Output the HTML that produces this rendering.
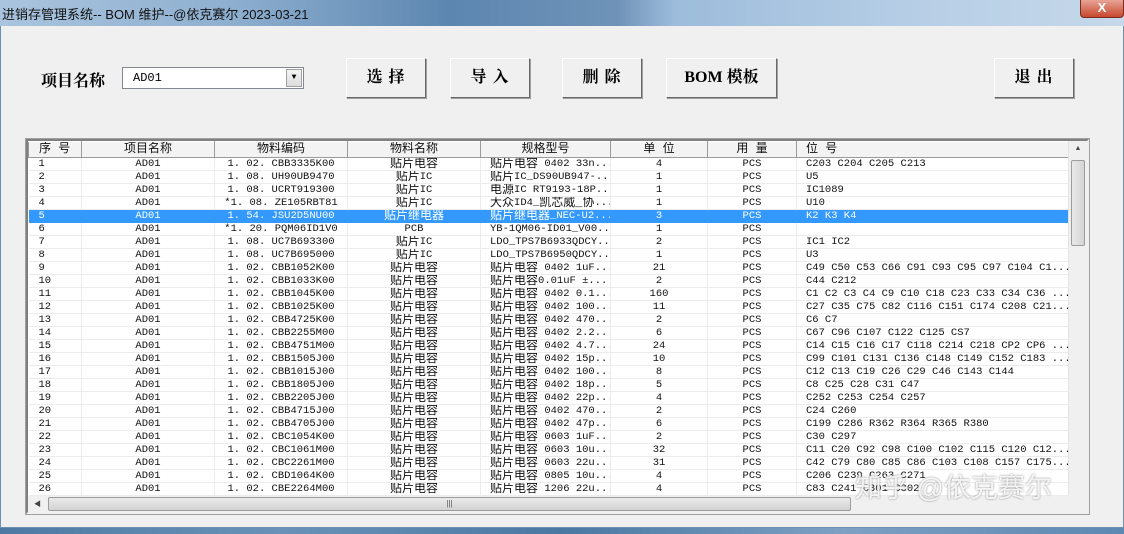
<!DOCTYPE html>
<html><head><meta charset="utf-8"><style>
*{margin:0;padding:0;box-sizing:border-box}
body{width:1124px;height:534px;overflow:hidden;background:#f0f0f0;position:relative;font-family:"Liberation Sans","Noto Sans CJK SC",sans-serif}
.title{position:absolute;left:0;top:0;width:1124px;height:26px;background:linear-gradient(90deg,#a9c4de 0%,#8fb0d0 20%,#5c86b0 40%,#6f93b8 55%,#9dbcdb 60%,#b5cde5 80%,#c6d8ea 100%);font-size:13px;color:#111;padding:4px 2px}
.close{position:absolute;right:0;top:0;width:44px;height:18px;background:linear-gradient(#e8a496,#c7472f);border:1px solid #7a2b22;border-top:none;border-radius:0 0 4px 4px;color:#fff;font-weight:bold;text-align:center;font-size:13px;line-height:16px}
.win{position:absolute;left:0;top:26px;width:1124px;height:502px;border:1px solid #6d8fb0;border-top:none;background:#f0f0f0}
.bot{position:absolute;left:0;top:528px;width:1124px;height:6px;background:linear-gradient(90deg,#4d7aa3,#6a92b8,#4a78a2,#7da0c3,#5d88b1)}
.lbl{position:absolute;left:41px;top:68px;font-size:16px;font-weight:bold;font-family:"Liberation Serif","Noto Serif CJK SC",serif}
.combo{position:absolute;left:122px;top:67px;width:182px;height:22px;background:#fff;border:1px solid #828790;font-family:"Liberation Mono","Noto Sans CJK SC",monospace;font-size:12px;padding:3px 0 0 10px}
.combo .ar{position:absolute;right:1px;top:1px;width:16px;height:18px;background:linear-gradient(#f4f4f4,#dcdcdc);border:1px solid #a0a0a0;font-size:8px;text-align:center;line-height:16px}
.btn{position:absolute;top:58px;height:40px;background:#f0f0f0;border:1px solid;border-color:#fff #6a6a6a #6a6a6a #fff;box-shadow:1px 1px 0 #a0a0a0;font-size:16px;font-weight:bold;text-align:center;line-height:38px;font-family:"Liberation Serif","Noto Serif CJK SC",serif;letter-spacing:1px}
.grid{position:absolute;left:26px;top:139px;width:1063px;height:375px;border:2px solid;border-color:#808080 #f0f0f0 #f0f0f0 #808080;outline:1px solid #a0a0a0;background:#fff}
table{position:absolute;left:28px;top:141px;width:1040px;border-collapse:collapse;table-layout:fixed;font-family:"Liberation Mono","Noto Sans CJK SC",monospace;font-size:10.5px}
td{height:13px;line-height:12px;padding:0;white-space:nowrap;overflow:hidden;border-right:1px solid #ececec;border-bottom:1px solid #ececec;text-align:center;color:#111;vertical-align:top}
td span{font-size:12px;line-height:12px;vertical-align:top}
.h td{font-size:12px}
td.l{text-align:left;padding-left:9px}
td:first-child{text-align:left;padding-left:10px}
tr.h td{height:16px;line-height:15px;background:#f3f3f3;border:1px solid #9a9a9a;border-top:1px solid #fff}
tr.s td{background:#3399ff;color:#fff;border-color:#3399ff}
.vs{position:absolute;left:1068px;top:141px;width:19px;height:355px;background:#f0f0f0;border-left:1px solid #e3e3e3}
.th{position:absolute;left:1071px;top:160px;width:14px;height:86px;background:linear-gradient(90deg,#e8e8e8,#d4d4d4);border:1px solid #9c9c9c;border-radius:2px}
.hs{position:absolute;left:28px;top:496px;width:1059px;height:16px;background:#f0f0f0}
.hth{position:absolute;left:48px;top:497px;width:803px;height:14px;background:linear-gradient(#eaeaea,#d2d2d2);border:1px solid #9c9c9c;border-radius:2px;font-size:8px;text-align:center;line-height:12px;color:#555}
.wm{position:absolute;left:855px;top:466px;font-size:27px;color:rgba(255,255,255,.85);text-shadow:0 0 2px #888;font-family:"Liberation Sans","Noto Sans CJK SC",sans-serif}
</style></head><body>
<div class="title">进销存管理系统-- BOM 维护--@依克赛尔 2023-03-21</div>
<div class="close">X</div>
<div class="win"></div>
<div class="bot"></div>
<div class="lbl">项目名称</div>
<div class="combo">AD01<div class="ar">▼</div></div>
<div class="btn" style="left:346px;width:80px">选 择</div>
<div class="btn" style="left:450px;width:80px">导 入</div>
<div class="btn" style="left:562px;width:80px">删 除</div>
<div class="btn" style="left:666px;width:111px;letter-spacing:0">BOM 模板</div>
<div class="btn" style="left:994px;width:80px">退 出</div>
<div class="grid"></div>
<table>
<colgroup><col style="width:53px"><col style="width:133px"><col style="width:133px"><col style="width:133px"><col style="width:130px"><col style="width:97px"><col style="width:89px"><col style="width:272px"></colgroup>
<tr class="h"><td>序 号</td><td>项目名称</td><td>物料编码</td><td>物料名称</td><td>规格型号</td><td>单 位</td><td>用 量</td><td class="l">位 号</td></tr>
<tr><td>1</td><td>AD01</td><td>1. 02. CBB3335K00</td><td><span>贴片电容</span></td><td class="l"><span>贴片电容</span> 0402 33n...</td><td>4</td><td>PCS</td><td class="l">C203 C204 C205 C213</td></tr>
<tr><td>2</td><td>AD01</td><td>1. 08. UH90UB9470</td><td><span>贴片</span>IC</td><td class="l"><span>贴片</span>IC_DS90UB947-...</td><td>1</td><td>PCS</td><td class="l">U5</td></tr>
<tr><td>3</td><td>AD01</td><td>1. 08. UCRT919300</td><td><span>贴片</span>IC</td><td class="l"><span>电源</span>IC RT9193-18P...</td><td>1</td><td>PCS</td><td class="l">IC1089</td></tr>
<tr><td>4</td><td>AD01</td><td>*1. 08. ZE105RBT81</td><td><span>贴片</span>IC</td><td class="l"><span>大众</span>ID4_<span>凯芯威_协</span>...</td><td>1</td><td>PCS</td><td class="l">U10</td></tr>
<tr class="s"><td>5</td><td>AD01</td><td>1. 54. JSU2D5NU00</td><td><span>贴片继电器</span></td><td class="l"><span>贴片继电器</span>_NEC-U2...</td><td>3</td><td>PCS</td><td class="l">K2 K3 K4</td></tr>
<tr><td>6</td><td>AD01</td><td>*1. 20. PQM06ID1V0</td><td>PCB</td><td class="l">YB-1QM06-ID01_V00...</td><td>1</td><td>PCS</td><td class="l"></td></tr>
<tr><td>7</td><td>AD01</td><td>1. 08. UC7B693300</td><td><span>贴片</span>IC</td><td class="l">LDO_TPS7B6933QDCY...</td><td>2</td><td>PCS</td><td class="l">IC1 IC2</td></tr>
<tr><td>8</td><td>AD01</td><td>1. 08. UC7B695000</td><td><span>贴片</span>IC</td><td class="l">LDO_TPS7B6950QDCY...</td><td>1</td><td>PCS</td><td class="l">U3</td></tr>
<tr><td>9</td><td>AD01</td><td>1. 02. CBB1052K00</td><td><span>贴片电容</span></td><td class="l"><span>贴片电容</span> 0402 1uF...</td><td>21</td><td>PCS</td><td class="l">C49 C50 C53 C66 C91 C93 C95 C97 C104 C1...</td></tr>
<tr><td>10</td><td>AD01</td><td>1. 02. CBB1033K00</td><td><span>贴片电容</span></td><td class="l"><span>贴片电容</span>0.01uF ±...</td><td>2</td><td>PCS</td><td class="l">C44 C212</td></tr>
<tr><td>11</td><td>AD01</td><td>1. 02. CBB1045K00</td><td><span>贴片电容</span></td><td class="l"><span>贴片电容</span> 0402 0.1...</td><td>160</td><td>PCS</td><td class="l">C1 C2 C3 C4 C9 C10 C18 C23 C33 C34 C36 ...</td></tr>
<tr><td>12</td><td>AD01</td><td>1. 02. CBB1025K00</td><td><span>贴片电容</span></td><td class="l"><span>贴片电容</span> 0402 100...</td><td>11</td><td>PCS</td><td class="l">C27 C35 C75 C82 C116 C151 C174 C208 C21...</td></tr>
<tr><td>13</td><td>AD01</td><td>1. 02. CBB4725K00</td><td><span>贴片电容</span></td><td class="l"><span>贴片电容</span> 0402 470...</td><td>2</td><td>PCS</td><td class="l">C6 C7</td></tr>
<tr><td>14</td><td>AD01</td><td>1. 02. CBB2255M00</td><td><span>贴片电容</span></td><td class="l"><span>贴片电容</span> 0402 2.2...</td><td>6</td><td>PCS</td><td class="l">C67 C96 C107 C122 C125 CS7</td></tr>
<tr><td>15</td><td>AD01</td><td>1. 02. CBB4751M00</td><td><span>贴片电容</span></td><td class="l"><span>贴片电容</span> 0402 4.7...</td><td>24</td><td>PCS</td><td class="l">C14 C15 C16 C17 C118 C214 C218 CP2 CP6 ...</td></tr>
<tr><td>16</td><td>AD01</td><td>1. 02. CBB1505J00</td><td><span>贴片电容</span></td><td class="l"><span>贴片电容</span> 0402 15p...</td><td>10</td><td>PCS</td><td class="l">C99 C101 C131 C136 C148 C149 C152 C183 ...</td></tr>
<tr><td>17</td><td>AD01</td><td>1. 02. CBB1015J00</td><td><span>贴片电容</span></td><td class="l"><span>贴片电容</span> 0402 100...</td><td>8</td><td>PCS</td><td class="l">C12 C13 C19 C26 C29 C46 C143 C144</td></tr>
<tr><td>18</td><td>AD01</td><td>1. 02. CBB1805J00</td><td><span>贴片电容</span></td><td class="l"><span>贴片电容</span> 0402 18p...</td><td>5</td><td>PCS</td><td class="l">C8 C25 C28 C31 C47</td></tr>
<tr><td>19</td><td>AD01</td><td>1. 02. CBB2205J00</td><td><span>贴片电容</span></td><td class="l"><span>贴片电容</span> 0402 22p...</td><td>4</td><td>PCS</td><td class="l">C252 C253 C254 C257</td></tr>
<tr><td>20</td><td>AD01</td><td>1. 02. CBB4715J00</td><td><span>贴片电容</span></td><td class="l"><span>贴片电容</span> 0402 470...</td><td>2</td><td>PCS</td><td class="l">C24 C260</td></tr>
<tr><td>21</td><td>AD01</td><td>1. 02. CBB4705J00</td><td><span>贴片电容</span></td><td class="l"><span>贴片电容</span> 0402 47p...</td><td>6</td><td>PCS</td><td class="l">C199 C286 R362 R364 R365 R380</td></tr>
<tr><td>22</td><td>AD01</td><td>1. 02. CBC1054K00</td><td><span>贴片电容</span></td><td class="l"><span>贴片电容</span> 0603 1uF...</td><td>2</td><td>PCS</td><td class="l">C30 C297</td></tr>
<tr><td>23</td><td>AD01</td><td>1. 02. CBC1061M00</td><td><span>贴片电容</span></td><td class="l"><span>贴片电容</span> 0603 10u...</td><td>32</td><td>PCS</td><td class="l">C11 C20 C92 C98 C100 C102 C115 C120 C12...</td></tr>
<tr><td>24</td><td>AD01</td><td>1. 02. CBC2261M00</td><td><span>贴片电容</span></td><td class="l"><span>贴片电容</span> 0603 22u...</td><td>31</td><td>PCS</td><td class="l">C42 C79 C80 C85 C86 C103 C108 C157 C175...</td></tr>
<tr><td>25</td><td>AD01</td><td>1. 02. CBD1064K00</td><td><span>贴片电容</span></td><td class="l"><span>贴片电容</span> 0805 10u...</td><td>4</td><td>PCS</td><td class="l">C206 C239 C263 C271</td></tr>
<tr><td>26</td><td>AD01</td><td>1. 02. CBE2264M00</td><td><span>贴片电容</span></td><td class="l"><span>贴片电容</span> 1206 22u...</td><td>4</td><td>PCS</td><td class="l">C83 C241 C301 C302</td></tr>
</table>
<div class="vs"><div style="font-size:7px;text-align:center;color:#444;margin-top:4px">▲</div></div>
<div class="th"></div>
<div class="hs"><div style="font-size:7px;color:#444;position:absolute;left:6px;top:3px">◀</div></div>
<div class="hth">|||</div>
<div class="wm">知乎 @依克赛尔</div>
</body></html>
